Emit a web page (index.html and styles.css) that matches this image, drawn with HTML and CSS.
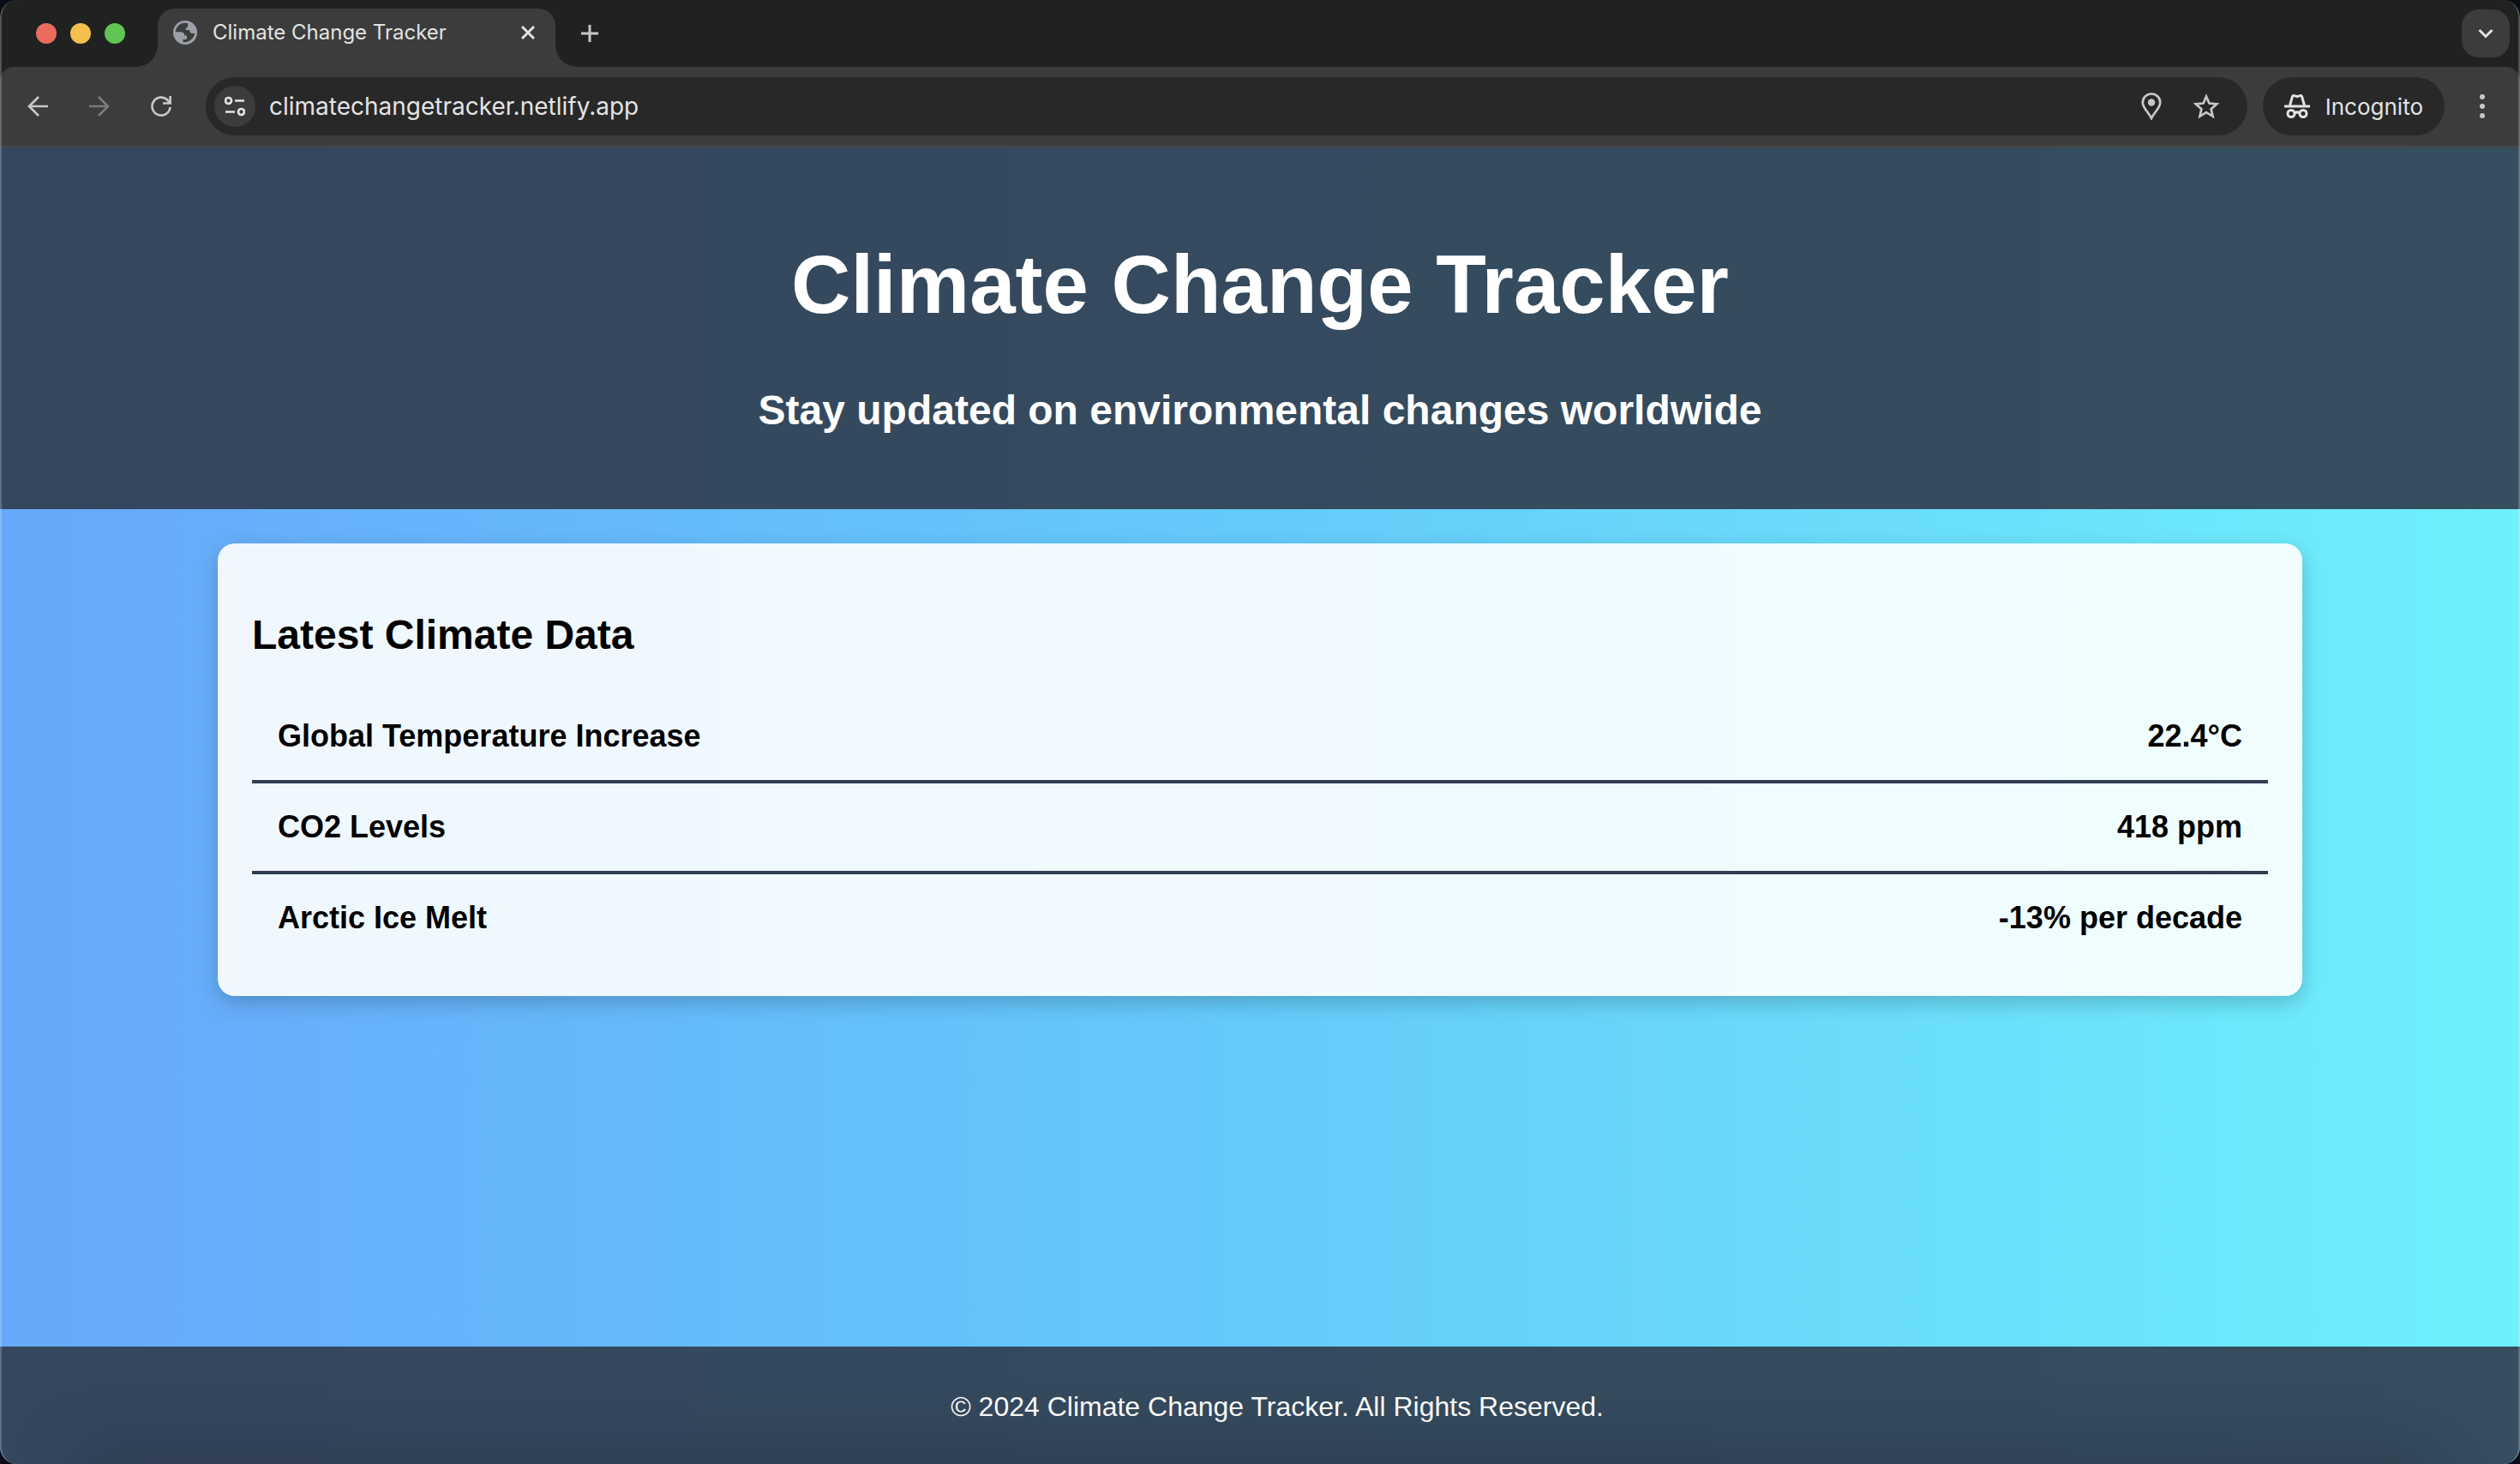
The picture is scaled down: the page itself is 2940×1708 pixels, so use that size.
FILE: index.html
```html
<!DOCTYPE html>
<html lang="en">
<head>
    <meta charset="UTF-8">
    <meta name="viewport" content="width=device-width, initial-scale=1.0">
    <title>Climate Change Tracker</title>
    <link rel="stylesheet" href="styles.css">
</head>
<body>
    <div class="window">
        <div class="tab-strip">
            <div class="lights">
                <button class="light red" aria-label="Close window"></button>
                <button class="light yellow" aria-label="Minimize window"></button>
                <button class="light green" aria-label="Zoom window"></button>
            </div>
            <div class="tab">
                <svg class="favicon" viewBox="0 0 28 28">
                    <circle cx="14" cy="14" r="14" fill="#9aa0a6"/>
                    <path d="M14 2.800C8 2.800 3 7.500 2.800 13.300H8c3 0 5.500 1.500 5.500 4.200H16v3c0 1-.8 1.500-1.800 1.500H11.500v3c7 1 13-4 13.700-10.500-2 1-4.500 1-5.500-1.500l-1-2h-4V9.500c0-1.500 2-1 2.500-3L17 3z" fill="#3c3c3c"/>
                </svg>
                <span class="tab-title">Climate Change Tracker</span>
                <button class="icon-button tab-close" aria-label="Close tab">
                    <svg width="16" height="16" viewBox="0 0 16 16"><path d="M1 1l14 14M15 1L1 15" stroke="#e3e3e3" stroke-width="3"/></svg>
                </button>
            </div>
            <button class="icon-button new-tab" aria-label="New tab">
                <svg width="20" height="20" viewBox="0 0 20 20"><path d="M10 0v20M0 10h20" stroke="#c7c7c7" stroke-width="3"/></svg>
            </button>
            <button class="icon-button tab-search" aria-label="Search tabs">
                <svg width="18" height="12" viewBox="0 0 18 12"><path d="M1.500 2L9 9.500 16.500 2" fill="none" stroke="#e3e3e3" stroke-width="3"/></svg>
            </button>
        </div>

        <div class="toolbar">
            <div class="nav-buttons">
                <button class="icon-button" aria-label="Back">
                    <svg width="24" height="24" viewBox="0 0 24 24"><path d="M24 12H2M13 1L2 12l11 11" fill="none" stroke="#c7c7c7" stroke-width="2.700"/></svg>
                </button>
                <button class="icon-button" aria-label="Forward" disabled>
                    <svg width="24" height="24" viewBox="0 0 24 24"><path d="M0 12h22M11 1l11 11-11 11" fill="none" stroke="#7c7c7c" stroke-width="2.700"/></svg>
                </button>
                <button class="icon-button" aria-label="Reload">
                    <svg width="24" height="24" viewBox="0 0 24 24"><path d="M22.500 13A10.500 10.500 0 1 1 19.500 4.700L22 8" fill="none" stroke="#c7c7c7" stroke-width="2.700"/><path d="M22.700 0v8.500H14" fill="none" stroke="#c7c7c7" stroke-width="2.700"/></svg>
                </button>
            </div>
            <div class="address-bar">
                <button class="icon-button site-info" aria-label="View site information">
                    <svg width="24" height="24" viewBox="0 0 24 24" fill="none" stroke="#e3e3e3" stroke-width="2.700"><circle cx="4.500" cy="5.500" r="3.500"/><path d="M12 5.500h11M1 18.500h11"/><circle cx="19.500" cy="18.500" r="3.500"/></svg>
                </button>
                <input class="url" type="text" aria-label="Address" value="climatechangetracker.netlify.app">
                <button class="icon-button" aria-label="Location">
                    <svg width="24" height="32" viewBox="0 0 24 32"><path d="M12 1.500C6 1.500 1.800 6 1.800 11.500 1.800 18 8 22 12 30c4-8 10.200-12 10.200-18.500C22.200 6 18 1.500 12 1.500z" fill="none" stroke="#c7c7c7" stroke-width="2.700"/><circle cx="12" cy="11.500" r="4.200" fill="#c7c7c7"/></svg>
                </button>
                <button class="icon-button" aria-label="Bookmark this tab">
                    <svg width="32" height="30" viewBox="0 0 32 30"><path d="M16 3.500l3.400 8.100 8.800.8-6.600 5.800 2 8.600-7.600-4.600-7.600 4.600 2-8.600-6.600-5.800 8.800-.8z" fill="none" stroke="#c7c7c7" stroke-width="2.700"/></svg>
                </button>
            </div>
            <button class="incognito">
                <svg width="30" height="28" viewBox="0 0 30 28" fill="none" stroke="#e3e3e3" stroke-width="3"><path d="M0 14h30"/><path d="M6.500 13L9.500 2.500c.4-1 1.200-1.300 2.200-.8l3.300.9 3.300-.9c1-.5 1.800-.2 2.200.8l3 10.500"/><circle cx="8" cy="22.500" r="4"/><circle cx="22" cy="22.500" r="4"/><path d="M12 22c2-1.500 4-1.500 6 0"/></svg>
                Incognito
            </button>
            <button class="icon-button" aria-label="Menu">
                <svg width="8" height="28" viewBox="0 0 8 28" fill="#c7c7c7"><circle cx="4" cy="3" r="3"/><circle cx="4" cy="14" r="3"/><circle cx="4" cy="25" r="3"/></svg>
            </button>
        </div>

        <div class="page">
            <header>
                <h1>Climate Change Tracker</h1>
                <p>Stay updated on environmental changes worldwide</p>
            </header>
            <main>
                <section class="data-section">
                    <h2>Latest Climate Data</h2>
                    <table>
                        <tr>
                            <th scope="row">Global Temperature Increase</th>
                            <td>22.4°C</td>
                        </tr>
                        <tr>
                            <th scope="row">CO2 Levels</th>
                            <td>418 ppm</td>
                        </tr>
                        <tr>
                            <th scope="row">Arctic Ice Melt</th>
                            <td>-13% per decade</td>
                        </tr>
                    </table>
                </section>
            </main>
            <footer>
                <p>© 2024 Climate Change Tracker. All Rights Reserved.</p>
            </footer>
        </div>
    </div>
</body>
</html>
```

FILE: styles.css
```css
* {
    box-sizing: border-box;
}
body {
    margin: 0;
    background: #0b0d18;
    font-family: "Liberation Sans", Arial, sans-serif;
}
button,
input {
    font-family: Inter, sans-serif;
    border: none;
    padding: 0;
    margin: 0;
    background: none;
    color: #e3e3e3;
}
svg {
    display: block;
    flex: none;
}

/* browser window */
.window {
    position: relative;
    display: flex;
    flex-direction: column;
    min-height: 100vh;
    border-radius: 20px;
    overflow: hidden;
    background: #202221;
}
.window::after {
    content: "";
    position: absolute;
    inset: 0;
    border-radius: 20px;
    border: solid rgba(255, 255, 255, 0.22);
    border-width: 0 2px;
    pointer-events: none;
}
.icon-button {
    display: flex;
    align-items: center;
    justify-content: center;
}
.tab-strip {
    display: flex;
    align-items: center;
    height: 78px;
    padding: 0 12px 0 42px;
}
.lights {
    display: flex;
    gap: 16px;
    margin-right: 38px;
}
.light {
    width: 24px;
    height: 24px;
    border-radius: 50%;
}
.red {
    background: #ed6a5e;
}
.yellow {
    background: #f5bf4f;
}
.green {
    background: #61c554;
}
.tab {
    position: relative;
    display: flex;
    align-items: center;
    align-self: flex-end;
    width: 464px;
    height: 68px;
    padding: 0 18px 12px;
    border-radius: 20px 20px 0 0;
    background: #3c3c3c;
}
.tab::before,
.tab::after {
    content: "";
    position: absolute;
    bottom: 0;
    width: 24px;
    height: 24px;
}
.tab::before {
    right: 100%;
    background: radial-gradient(circle at 0 0, transparent 23px, #3c3c3c 24px);
}
.tab::after {
    left: 100%;
    background: radial-gradient(circle at 100% 0, transparent 23px, #3c3c3c 24px);
}
.favicon {
    width: 28px;
    height: 28px;
    margin-right: 18px;
}
.tab-title {
    flex: 1;
    font-family: Inter, sans-serif;
    font-size: 24px;
    line-height: 28px;
    color: #e3e3e3;
    white-space: nowrap;
}
.tab-close {
    width: 28px;
    height: 28px;
}
.new-tab {
    width: 56px;
    height: 56px;
    margin-left: 12px;
}
.tab-search {
    width: 56px;
    height: 56px;
    margin-left: auto;
    border-radius: 20px;
    background: #3c3c3c;
}

.toolbar {
    display: flex;
    align-items: center;
    gap: 18px;
    height: 94px;
    padding: 0 26px 0 16px;
    border-bottom: 2px solid #474747;
    border-radius: 16px 16px 0 0;
    background: #3c3c3c;
}
.nav-buttons {
    display: flex;
    gap: 16px;
    margin-right: 6px;
}
.nav-buttons .icon-button {
    width: 56px;
    height: 56px;
}
.toolbar > .icon-button {
    width: 36px;
    height: 56px;
    margin-left: 8px;
}
.address-bar {
    flex: 1;
    display: flex;
    align-items: center;
    gap: 8px;
    height: 68px;
    padding: 0 20px 0 10px;
    border-radius: 34px;
    background: #282828;
}
.address-bar .icon-button {
    width: 56px;
    height: 48px;
}
.address-bar .site-info {
    width: 48px;
    margin-right: 8px;
    border-radius: 24px;
    background: #3c3c3c;
}
.url {
    flex: 1;
    min-width: 0;
    font-size: 28px;
    outline: none;
}
.incognito {
    display: flex;
    align-items: center;
    gap: 18px;
    height: 68px;
    padding: 0 25px;
    border-radius: 34px;
    background: #282828;
    font-size: 26px;
}

/* page content */
.page {
    flex: 1;
    display: flex;
    flex-direction: column;
    background: linear-gradient(to right, #67a8fa, #64cbfa 50%, #6ff0fc);
}
header {
    padding: 40px;
    background: rgba(48, 60, 77, 0.9);
    color: #fff;
    text-align: center;
}
header h1 {
    margin: 64px 0;
    font-size: 96px;
    line-height: 111px;
}
header p {
    margin: 0 0 47px;
    font-size: 48px;
    font-weight: bold;
    line-height: 56px;
}
main {
    flex: 1;
    padding: 40px 0;
}
.data-section {
    box-sizing: content-box;
    width: 80%;
    margin: 0 auto;
    padding: 40px;
    border-radius: 20px;
    background: rgba(255, 255, 255, 0.9);
    box-shadow: 0 8px 24px rgba(0, 0, 0, 0.2);
}
.data-section h2 {
    margin: 40px 0;
    font-size: 48px;
    line-height: 54px;
}
table {
    width: 100%;
    border-spacing: 0;
    font-size: 36px;
    font-weight: bold;
    line-height: 42px;
}
th,
td {
    padding: 30px;
    border-bottom: 4px solid #2f3e52;
    text-align: left;
}
td {
    text-align: right;
}
tr:last-child th,
tr:last-child td {
    border-bottom: none;
}
footer {
    position: relative;
    padding: 52px 0 48px 40px;
    background: rgba(48, 60, 77, 0.9);
    color: #fff;
    text-align: center;
}
footer::after {
    content: "";
    position: absolute;
    top: 100%;
    left: 100px;
    right: 100px;
    height: 40px;
    box-shadow: 0 0 80px 10px rgba(30, 35, 50, 0.4);
}
footer p {
    margin: 0;
    font-size: 32px;
    line-height: 37px;
}
```
